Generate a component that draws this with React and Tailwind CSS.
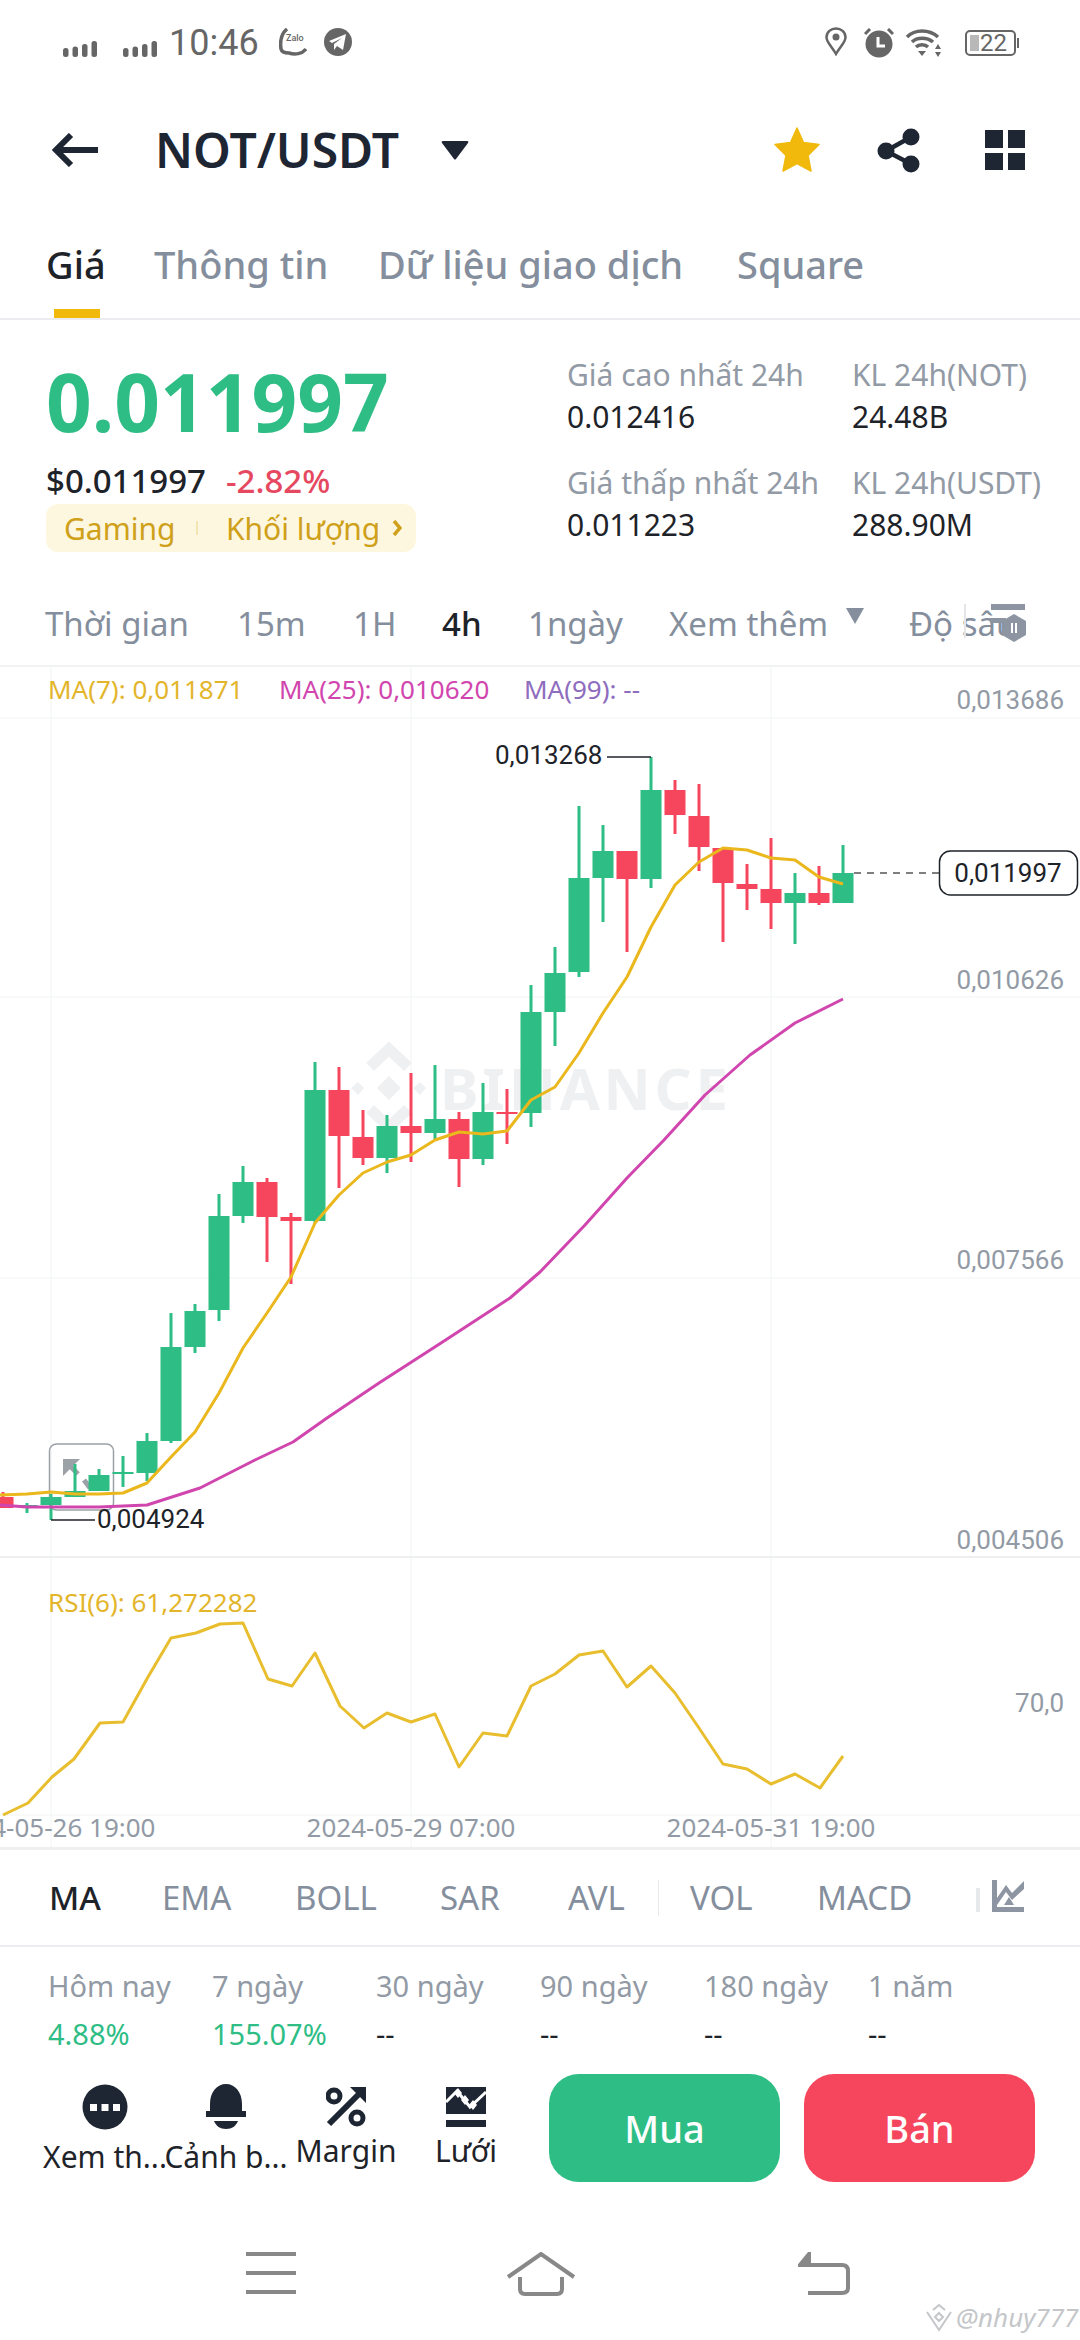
import React from 'react';

const GREEN = '#2EBD85';
const RED = '#F6465D';

// [center x, wick top, body top, body bottom, wick bottom, up?]
const candles = [
  [3, 1492, 1497, 1508, 1508, 0],
  [27, 1503, 1505, 1507, 1513, 1],
  [51, 1494, 1497, 1505, 1520, 1],
  [75, 1464, 1491, 1497, 1497, 1],
  [99, 1469, 1475, 1491, 1491, 1],
  [123, 1456, 1472, 1474, 1487, 1],
  [147, 1433, 1441, 1473, 1481, 1],
  [171, 1313, 1347, 1441, 1443, 1],
  [195, 1304, 1311, 1347, 1353, 1],
  [219, 1194, 1216, 1310, 1321, 1],
  [243, 1166, 1182, 1216, 1223, 1],
  [267, 1178, 1182, 1217, 1262, 0],
  [291, 1213, 1217, 1221, 1284, 0],
  [315, 1062, 1090, 1221, 1223, 1],
  [339, 1067, 1090, 1136, 1188, 0],
  [363, 1110, 1137, 1158, 1165, 0],
  [387, 1115, 1126, 1158, 1173, 1],
  [411, 1073, 1126, 1133, 1162, 0],
  [435, 1065, 1119, 1133, 1139, 1],
  [459, 1112, 1119, 1159, 1187, 0],
  [483, 1083, 1112, 1159, 1165, 1],
  [507, 1089, 1112, 1114, 1144, 0],
  [531, 985, 1012, 1113, 1127, 1],
  [555, 947, 973, 1012, 1046, 1],
  [579, 806, 878, 972, 977, 1],
  [603, 825, 851, 878, 922, 1],
  [627, 851, 851, 879, 952, 0],
  [651, 757, 790, 879, 888, 1],
  [675, 780, 790, 815, 834, 0],
  [699, 784, 816, 847, 871, 0],
  [723, 848, 848, 883, 942, 0],
  [747, 864, 884, 889, 910, 0],
  [771, 838, 889, 903, 929, 0],
  [795, 873, 893, 903, 944, 1],
  [819, 866, 893, 903, 905, 0],
  [843, 845, 873, 903, 903, 1],
];

const ma7 = '0,1495 27,1494 51,1492 75,1494 99,1494 123,1493 147,1483 171,1457 195,1432 219,1393 243,1348 267,1313 291,1277 315,1223 339,1195 363,1173 387,1162 411,1155 435,1140 459,1132 483,1134 507,1131 531,1100 555,1087 579,1053 603,1013 627,977 651,927 675,885 699,862 723,848 747,850 771,858 795,860 819,877 843,884';
const ma25 = '0,1505 27,1507 51,1507 99,1507 147,1505 200,1488 255,1460 293,1442 327,1418 379,1383 441,1343 510,1298 540,1272 585,1225 627,1178 664,1140 705,1095 750,1055 795,1023 843,999';
const rsi = '3,1815 28,1803 52,1777 74,1759 100,1723 123,1722 148,1677 171,1638 196,1633 220,1624 243,1623 268,1679 292,1686 315,1653 340,1706 364,1728 387,1713 411,1722 435,1714 459,1767 483,1733 507,1736 531,1686 555,1674 579,1655 603,1651 627,1687 651,1666 675,1693 699,1728 723,1764 747,1769 771,1784 795,1774 820,1788 843,1756';

const Chart = () => (
  <div className="relative h-[1180px] w-[1080px] shrink-0">
    <svg className="block h-[1180px] w-[1080px]" viewBox="0 667 1080 1180">
      <g stroke="#f6f7f7" strokeWidth="1.5">
        <line x1="51" y1="667" x2="51" y2="1847" />
        <line x1="411" y1="667" x2="411" y2="1847" />
        <line x1="771" y1="667" x2="771" y2="1847" />
        <line x1="0" y1="718" x2="1080" y2="718" />
        <line x1="0" y1="997" x2="1080" y2="997" />
        <line x1="0" y1="1278" x2="1080" y2="1278" />
        <line x1="0" y1="1815" x2="1080" y2="1815" />
      </g>
      <line x1="0" y1="1557" x2="1080" y2="1557" stroke="#eeeff0" strokeWidth="2" />

      {/* watermark */}
      <g fill="none" stroke="#eff0f1">
        <path d="M370 1067 L389 1049 L408 1067 M370 1109 L389 1127 L408 1109" strokeWidth="11" />
      </g>
      <g fill="#eff0f1">
        <path d="M389 1076 L401 1088 L389 1100 L377 1088 Z" />
        <path d="M358 1082 L364 1088 L358 1095 L351 1088 Z" />
        <path d="M420 1082 L426 1088 L420 1095 L413 1088 Z" />
      </g>
      <text x="440" y="1110" fill="#eff0f1" className="font-['Noto_Sans'] text-[58px] font-bold" textLength="288">BINANCE</text>

      {/* expand box */}
      <rect x="49.5" y="1444" width="64" height="66" rx="7" fill="none" stroke="#9ca1a8" strokeWidth="1.5" />
      <path d="M63 1459 L80 1459 L63 1476 Z" fill="#9ca1a8" />
      <path d="M70 1466 L78 1474 M84 1480 L90 1488" stroke="#9ca1a8" strokeWidth="5" />

      {candles.map(([x, wt, bt, bb, wb, up]) => (
        <g key={x} fill={up ? GREEN : RED}>
          <rect x={x - 1.5} y={wt} width="3" height={wb - wt} />
          <rect x={x - 10.5} y={bt} width="21" height={bb - bt} />
        </g>
      ))}

      <polyline points={ma7} fill="none" stroke="#EAB71C" strokeWidth="3" strokeLinejoin="round" />
      <polyline points={ma25} fill="none" stroke="#D146AE" strokeWidth="3" strokeLinejoin="round" />

      {/* high / low markers */}
      <path d="M607 757 H651" stroke="#1e2329" strokeWidth="1.5" />
      <path d="M51 1520 H95" stroke="#1e2329" strokeWidth="1.5" />
      <g className="font-['Roboto'] text-[26px]" fill="#1e2329">
        <text x="495" y="764">0,013268</text>
        <text x="97" y="1528">0,004924</text>
      </g>

      {/* last price */}
      <path d="M854 873 H939" stroke="#555" strokeWidth="1.5" strokeDasharray="7 6" />
      <rect x="939.5" y="851" width="138" height="44" rx="11" fill="#fff" stroke="#1e2329" strokeWidth="1.5" />
      <text x="1008" y="882" textAnchor="middle" fill="#1e2329" className="font-['Roboto'] text-[26px]">0,011997</text>

      <g className="font-['Roboto'] text-[26px]" fill="#929aa5" textAnchor="end">
        <text x="1064" y="709">0,013686</text>
        <text x="1064" y="989">0,010626</text>
        <text x="1064" y="1269">0,007566</text>
        <text x="1064" y="1549">0,004506</text>
        <text x="1064" y="1712">70,0</text>
      </g>

      <polyline points={rsi} fill="none" stroke="#E8BE2F" strokeWidth="3" strokeLinejoin="round" />
      <text x="48" y="1612" fill="#E3B52B" className="font-['Noto_Sans'] text-[26px]">RSI(6): 61,272282</text>

      <g className="font-['Noto_Sans'] text-[26px]" fill="#929aa5" textAnchor="middle">
        <text x="51" y="1837">2024-05-26 19:00</text>
        <text x="411" y="1837">2024-05-29 07:00</text>
        <text x="771" y="1837">2024-05-31 19:00</text>
      </g>
    </svg>

    <div className="absolute left-[48px] top-[6px] flex text-[26px] leading-[32px]">
      <span className="w-[231px] text-[#E3B52B]">MA(7): 0,011871</span>
      <span className="w-[245px] text-[#D146AE]">MA(25): 0,010620</span>
      <span className="text-[#8E6CBE]">MA(99): --</span>
    </div>
  </div>
);

const SignalBars = () => (
  <svg className="h-[16px] w-[34px]" viewBox="0 0 34 16" fill="#666">
    <rect x="0" y="7" width="5.5" height="9" rx="2.5" />
    <rect x="9.5" y="5.5" width="5.5" height="10.5" rx="2.5" />
    <rect x="19" y="3" width="5.5" height="13" rx="2.5" />
    <rect x="28.5" y="0" width="5.5" height="16" rx="2.5" />
  </svg>
);

const StatusBar = () => (
  <div className="flex h-[92px] w-[1080px] shrink-0 items-start pl-[63px] font-['Roboto'] text-[#666]">
    <div className="mt-[41px] mr-[26px]"><SignalBars /></div>
    <div className="mt-[41px] mr-[12px]"><SignalBars /></div>
    <span className="mt-[22px] mr-[22px] w-[88px] text-[36px] leading-[42px]">10:46</span>
    <div className="relative mt-[28px] mr-[17px] h-[28px] w-[28px]">
      <svg className="h-[28px] w-[28px]" viewBox="0 0 28 28" fill="none" stroke="#666" strokeWidth="3.5">
        <path d="M8 1 C2 6 1 14 2 21 C3 25 7 25 10 25 C16 27 23 26 27 21" />
      </svg>
      <span className="absolute left-[7px] top-[4px] text-[9px] leading-[12px] font-medium">Zalo</span>
    </div>
    <svg className="mt-[28px] h-[28px] w-[28px]" viewBox="0 0 28 28">
      <circle cx="14" cy="14" r="14" fill="#666" />
      <path d="M5 13 L22 6 L19 22 L13 18 L10 22 L10 16 L18 10 L8 15 Z" fill="#fff" />
    </svg>

    <svg className="mt-[27px] ml-[473px] h-[29px] w-[22px]" viewBox="0 0 22 29" fill="none" stroke="#666">
      <path d="M11 27 C7 20 1.5 15 1.5 10.5 C1.5 5 6 1.5 11 1.5 C16 1.5 20.5 5 20.5 10.5 C20.5 15 15 20 11 27 Z" strokeWidth="2.5" />
      <circle cx="11" cy="10" r="3.5" fill="#666" stroke="none" />
    </svg>
    <svg className="mt-[28px] ml-[17px] h-[30px] w-[30px]" viewBox="0 0 30 30">
      <circle cx="15" cy="16" r="13.5" fill="#666" />
      <path d="M1 6 L6 1 M29 6 L24 1" stroke="#666" strokeWidth="3" />
      <path d="M14 9 V18 H21" fill="none" stroke="#fff" strokeWidth="3" />
    </svg>
    <svg className="mt-[29px] ml-[11px] h-[28px] w-[36px]" viewBox="0 0 36 28" fill="none" stroke="#666">
      <path d="M2 8 C10 0 24 0 33 8" strokeWidth="3.5" />
      <path d="M7 13 C12 8 22 8 28 13" strokeWidth="3.5" />
      <path d="M11 18 C14 15 20 15 23 18" strokeWidth="3.5" />
      <path d="M13 22 H21 L17 27 Z" fill="#666" stroke="none" />
      <path d="M33 15 L36 20 H30 Z M30 23 H36 L33 28 Z" fill="#666" stroke="none" />
    </svg>
    <div className="relative mt-[30px] ml-[24px] h-[26px] w-[55px]">
      <div className="h-[26px] w-[51px] rounded-[5px] border-[2.5px] border-[#666]" />
      <div className="absolute left-[5px] top-[5px] h-[16px] w-[9px] bg-[#b8b8b8]" />
      <span className="absolute left-[15px] top-[0px] text-[24px] leading-[26px]">22</span>
      <div className="absolute left-[52px] top-[8px] h-[10px] w-[2px] bg-[#666]" />
    </div>
  </div>
);

const Header = () => (
  <div className="flex h-[116px] w-[1080px] shrink-0 items-center text-[#1E2633]">
    <svg className="ml-[52px] h-[34px] w-[46px]" viewBox="0 0 46 34" fill="none" stroke="#1E2633" strokeWidth="6">
      <path d="M46 17 H5 M19 2 L4 17 L19 32" />
    </svg>
    <span className="ml-[57px] w-[286px] text-[48px] leading-[58px] font-semibold">NOT/USDT</span>
    <svg className="h-[20px] w-[28px]" viewBox="0 0 28 20">
      <path d="M2 1 H26 Q28 1 27 3 L15 19 Q14 20 13 19 L1 3 Q0 1 2 1 Z" fill="#1E2633" />
    </svg>
    <svg className="ml-[305px] h-[46px] w-[46px]" viewBox="0 0 46 46">
      <path d="M23 1 L29.5 15.5 L45 17.5 L34 28.5 L37 44 L23 36.5 L9 44 L12 28.5 L1 17.5 L16.5 15.5 Z" fill="#F0B90B" stroke="#F0B90B" strokeWidth="1.5" strokeLinejoin="round" />
    </svg>
    <svg className="ml-[57px] h-[45px] w-[43px]" viewBox="0 0 43 45">
      <path d="M34 9 L9 23 L34 36" fill="none" stroke="#1E2633" strokeWidth="4.5" />
      <circle cx="34" cy="9" r="8.5" fill="#1E2633" />
      <circle cx="9" cy="23" r="8.5" fill="#1E2633" />
      <circle cx="34" cy="36" r="8.5" fill="#1E2633" />
    </svg>
    <div className="ml-[65px] grid h-[40px] w-[40px] grid-cols-2 gap-[5px]">
      <div className="bg-[#1E2633]" />
      <div className="bg-[#1E2633]" />
      <div className="bg-[#1E2633]" />
      <div className="bg-[#1E2633]" />
    </div>
  </div>
);

const Tabs = () => (
  <div className="relative flex h-[112px] w-[1080px] shrink-0 items-start border-b-2 border-[#eaecef] pt-[31px] text-[38px] leading-[50px] font-medium text-[#848E9C]">
    <span className="ml-[46px] w-[108px] text-[#1E2329]">Giá</span>
    <span className="w-[224px]">Thông tin</span>
    <span className="w-[359px]">Dữ liệu giao dịch</span>
    <span>Square</span>
    <div className="absolute bottom-0 left-[54px] h-[9px] w-[46px] bg-[#F0B90B]" />
  </div>
);

const Stats = () => (
  <div className="flex h-[263px] w-[1080px] shrink-0">
    <div className="w-[567px] pl-[46px]">
      <div className="mt-[39px] text-[80px] leading-[84px] font-bold text-[#2EBD85]">0.011997</div>
      <div className="mt-[16px] flex text-[33px] leading-[44px] font-medium">
        <span className="w-[180px] text-[#1E2329]">$0.011997</span>
        <span className="text-[#E5485F]">-2.82%</span>
      </div>
      <div className="mt-[1px] flex h-[48px] w-[370px] items-center rounded-[12px] bg-[#FEF7E0] pl-[18px] text-[30px] text-[#CFA01A]">
        <span className="w-[132px]">Gaming</span>
        <div className="mr-[28px] h-[14px] w-[2px] bg-[#F3E4B3]" />
        <span className="w-[166px]">Khối lượng</span>
        <svg className="h-[16px] w-[10px]" viewBox="0 0 10 16" fill="none" stroke="#CFA01A" strokeWidth="3.5">
          <path d="M2 1 L8 8 L2 15" />
        </svg>
      </div>
    </div>
    <div className="grid h-[192px] w-[513px] grid-cols-[285px_228px] grid-rows-[42px_42px_42px_42px] gap-y-0 pt-[34px] text-[30px] leading-[42px]">
      <span className="text-[#929AA5]">Giá cao nhất 24h</span>
      <span className="text-[#929AA5]">KL 24h(NOT)</span>
      <span className="text-[#1E2329]">0.012416</span>
      <span className="text-[#1E2329]">24.48B</span>
      <span className="mt-[24px] text-[#929AA5]">Giá thấp nhất 24h</span>
      <span className="mt-[24px] text-[#929AA5]">KL 24h(USDT)</span>
      <span className="mt-[24px] text-[#1E2329]">0.011223</span>
      <span className="mt-[24px] text-[#1E2329]">288.90M</span>
    </div>
  </div>
);

const Intervals = () => (
  <div className="relative flex h-[84px] w-[1080px] shrink-0 items-center overflow-hidden border-b-2 border-[#f1f2f3] pl-[45px] text-[33px] text-[#848E9C]">
    <span className="w-[192px]">Thời gian</span>
    <span className="w-[116px]">15m</span>
    <span className="w-[89px]">1H</span>
    <span className="w-[86px] font-medium text-[#1E2329]">4h</span>
    <span className="w-[141px]">1ngày</span>
    <span className="w-[177px]">Xem thêm</span>
    <svg className="mb-[16px] h-[16px] w-[18px]" viewBox="0 0 18 16">
      <path d="M0 0 H18 L9 16 Z" fill="#848E9C" />
    </svg>
    <span className="ml-[45px] whitespace-nowrap">Độ sâu</span>
    <div className="absolute left-[964px] top-[21px] h-[34px] w-[2px] bg-[#e3e5e8]" />
    <svg className="absolute left-[985px] top-[20px] h-[42px] w-[44px]" viewBox="0 0 44 42">
      <rect x="6" y="1" width="34" height="6" fill="#8D95A3" />
      <rect x="5" y="15" width="16" height="5" fill="#8D95A3" />
      <path d="M29 11 L41 18 V32 L29 39 L17 32 V18 Z" fill="#8D95A3" />
      <rect x="26" y="20" width="2" height="10" fill="#fff" />
      <rect x="30" y="20" width="2" height="10" fill="#fff" />
    </svg>
  </div>
);

const Indicators = () => (
  <div className="relative flex h-[100px] w-[1080px] shrink-0 items-center border-t-[3px] border-b-2 border-t-[#eff0f1] border-b-[#eaecef] pl-[49px] text-[33px] text-[#848E9C]">
    <span className="w-[113px] font-medium text-[#1E2329]">MA</span>
    <span className="w-[133px]">EMA</span>
    <span className="w-[145px]">BOLL</span>
    <span className="w-[128px]">SAR</span>
    <span className="w-[122px]">AVL</span>
    <span className="w-[127px]">VOL</span>
    <span>MACD</span>
    <div className="absolute left-[658px] top-[30px] h-[36px] w-[1px] bg-[#e6e8ea]" />
    <div className="absolute left-[976px] top-[38px] h-[24px] w-[4px] bg-[#e6e8ea]" />
    <svg className="absolute left-[992px] top-[30px] h-[32px] w-[32px]" viewBox="0 0 32 32" fill="#8D95A3">
      <path d="M0 0 H5 V27 H32 V32 H0 Z" />
      <path d="M5 18 L14 5 L20 13 L32 1 V9 L20 20 L14 12 L5 25 Z" />
      <path d="M17 17 L22 25 H12 Z" />
    </svg>
  </div>
);

const Performance = () => (
  <div className="grid h-[127px] w-[1080px] shrink-0 grid-cols-[164px_164px_164px_164px_164px_164px] grid-rows-[48px_48px] gap-0 pt-[15px] pl-[48px] text-[29px] leading-[48px]">
    <span className="text-[#929AA5]">Hôm nay</span>
    <span className="text-[#929AA5]">7 ngày</span>
    <span className="text-[#929AA5]">30 ngày</span>
    <span className="text-[#929AA5]">90 ngày</span>
    <span className="text-[#929AA5]">180 ngày</span>
    <span className="text-[#929AA5]">1 năm</span>
    <span className="text-[#2EBD85]">4.88%</span>
    <span className="text-[#2EBD85]">155.07%</span>
    <span className="text-[#1E2329]">--</span>
    <span className="text-[#1E2329]">--</span>
    <span className="text-[#1E2329]">--</span>
    <span className="text-[#1E2329]">--</span>
  </div>
);

const Actions = () => (
  <div className="flex h-[108px] w-[1080px] shrink-0">
    <div className="grid w-[549px] grid-cols-[121px_120px_120px_120px] pl-[45px] text-center text-[30px] leading-[40px] text-[#1E2329]">
      <div className="flex w-[120px] flex-col items-center">
        <svg className="mt-[10px] h-[46px] w-[46px]" viewBox="0 0 46 46">
          <circle cx="23" cy="23" r="22.5" fill="#1E2633" />
          <rect x="8" y="20" width="7" height="7" fill="#fff" />
          <rect x="19.5" y="20" width="7" height="7" fill="#fff" />
          <rect x="31" y="20" width="7" height="7" fill="#fff" />
        </svg>
        <span className="mt-[7px] whitespace-nowrap">Xem th...</span>
      </div>
      <div className="flex w-[120px] flex-col items-center">
        <svg className="mt-[10px] h-[46px] w-[40px]" viewBox="0 0 40 46" fill="#1E2633">
          <path d="M4 27 V20 C4 8 11 0 20 0 C29 0 36 8 36 20 V27 H40 V33 H0 V27 Z" />
          <path d="M8 37 H32 C30 42 26 45 20 45 C14 45 10 42 8 37 Z" />
        </svg>
        <span className="mt-[7px] whitespace-nowrap">Cảnh b...</span>
      </div>
      <div className="flex w-[120px] flex-col items-center">
        <svg className="mt-[13px] h-[40px] w-[40px]" viewBox="0 0 40 40" fill="none" stroke="#1E2633">
          <path d="M3 37 L36 4" strokeWidth="6" />
          <path d="M24 0 H40 V16 Z" fill="#1E2633" stroke="none" />
          <path d="M8 1.5 L15 8.5 L8 15.5 L1 8.5 Z" strokeWidth="0" fill="#fff" />
          <circle cx="8" cy="9" r="6" strokeWidth="5" />
          <circle cx="31" cy="31" r="6" strokeWidth="5" />
        </svg>
        <span className="mt-[4px]">Margin</span>
      </div>
      <div className="flex w-[120px] flex-col items-center">
        <svg className="mt-[13px] h-[40px] w-[40px]" viewBox="0 0 40 40">
          <rect x="0" y="0" width="40" height="27" fill="#1E2633" />
          <rect x="0" y="33" width="40" height="7" fill="#1E2633" />
          <path d="M0 15 L11 4 L24 20 L40 5" fill="none" stroke="#fff" strokeWidth="3" />
          <path d="M12 1 L16 6 L12 11 L8 6 Z M19 8 L23 13 L19 18 L15 13 Z M27 13 L31 18 L27 23 L23 18 Z" fill="#fff" />
        </svg>
        <span className="mt-[4px]">Lưới</span>
      </div>
    </div>
    <button className="flex h-[108px] w-[231px] items-center justify-center rounded-[30px] bg-[#2EBD85] text-[38px] font-medium text-white">Mua</button>
    <button className="ml-[24px] flex h-[108px] w-[231px] items-center justify-center rounded-[30px] bg-[#F6465D] text-[38px] font-medium text-white">Bán</button>
  </div>
);

const NavBar = () => (
  <div className="relative flex h-[156px] w-[1080px] shrink-0 items-start pt-[70px]">
    <div className="ml-[246px] flex h-[42px] w-[50px] flex-col justify-between">
      <div className="h-[4px] bg-[#888]" />
      <div className="h-[4px] bg-[#888]" />
      <div className="h-[4px] bg-[#888]" />
    </div>
    <svg className="ml-[210px] h-[44px] w-[70px]" viewBox="0 0 70 44" fill="none" stroke="#888" strokeWidth="4">
      <path d="M2 25 L35 2 L68 25" />
      <path d="M14 25 V37 Q14 42 19 42 H51 Q56 42 56 37 V25" />
    </svg>
    <svg className="ml-[222px] h-[44px] w-[52px]" viewBox="0 0 52 44" fill="none" stroke="#888" strokeWidth="4">
      <path d="M4 13 H44 Q50 13 50 19 V36 Q50 41 44 41 H10" />
      <path d="M11 2 L2 13 H11 Z" fill="#888" />
    </svg>
    <div className="absolute bottom-[5px] left-[925px] flex items-center gap-[3px] text-[#c4c6c9]">
      <svg className="h-[30px] w-[28px]" viewBox="0 0 28 30" fill="none" stroke="#c4c6c9" strokeWidth="2">
        <path d="M2 10 L14 28 L26 10 M8 8 L14 3 L20 8 M14 11 L18 15 L14 19 L10 15 Z" />
      </svg>
      <span className="text-[26px] leading-[32px] italic">@nhuy777</span>
    </div>
  </div>
);

const App = () => {
  return (
    <div className="flex h-[2340px] w-[1080px] flex-col overflow-hidden bg-white font-['Noto_Sans',sans-serif]">
      <StatusBar />
      <Header />
      <Tabs />
      <Stats />
      <Intervals />
      <Chart />
      <Indicators />
      <Performance />
      <Actions />
      <NavBar />
    </div>
  );
};

export default App;
